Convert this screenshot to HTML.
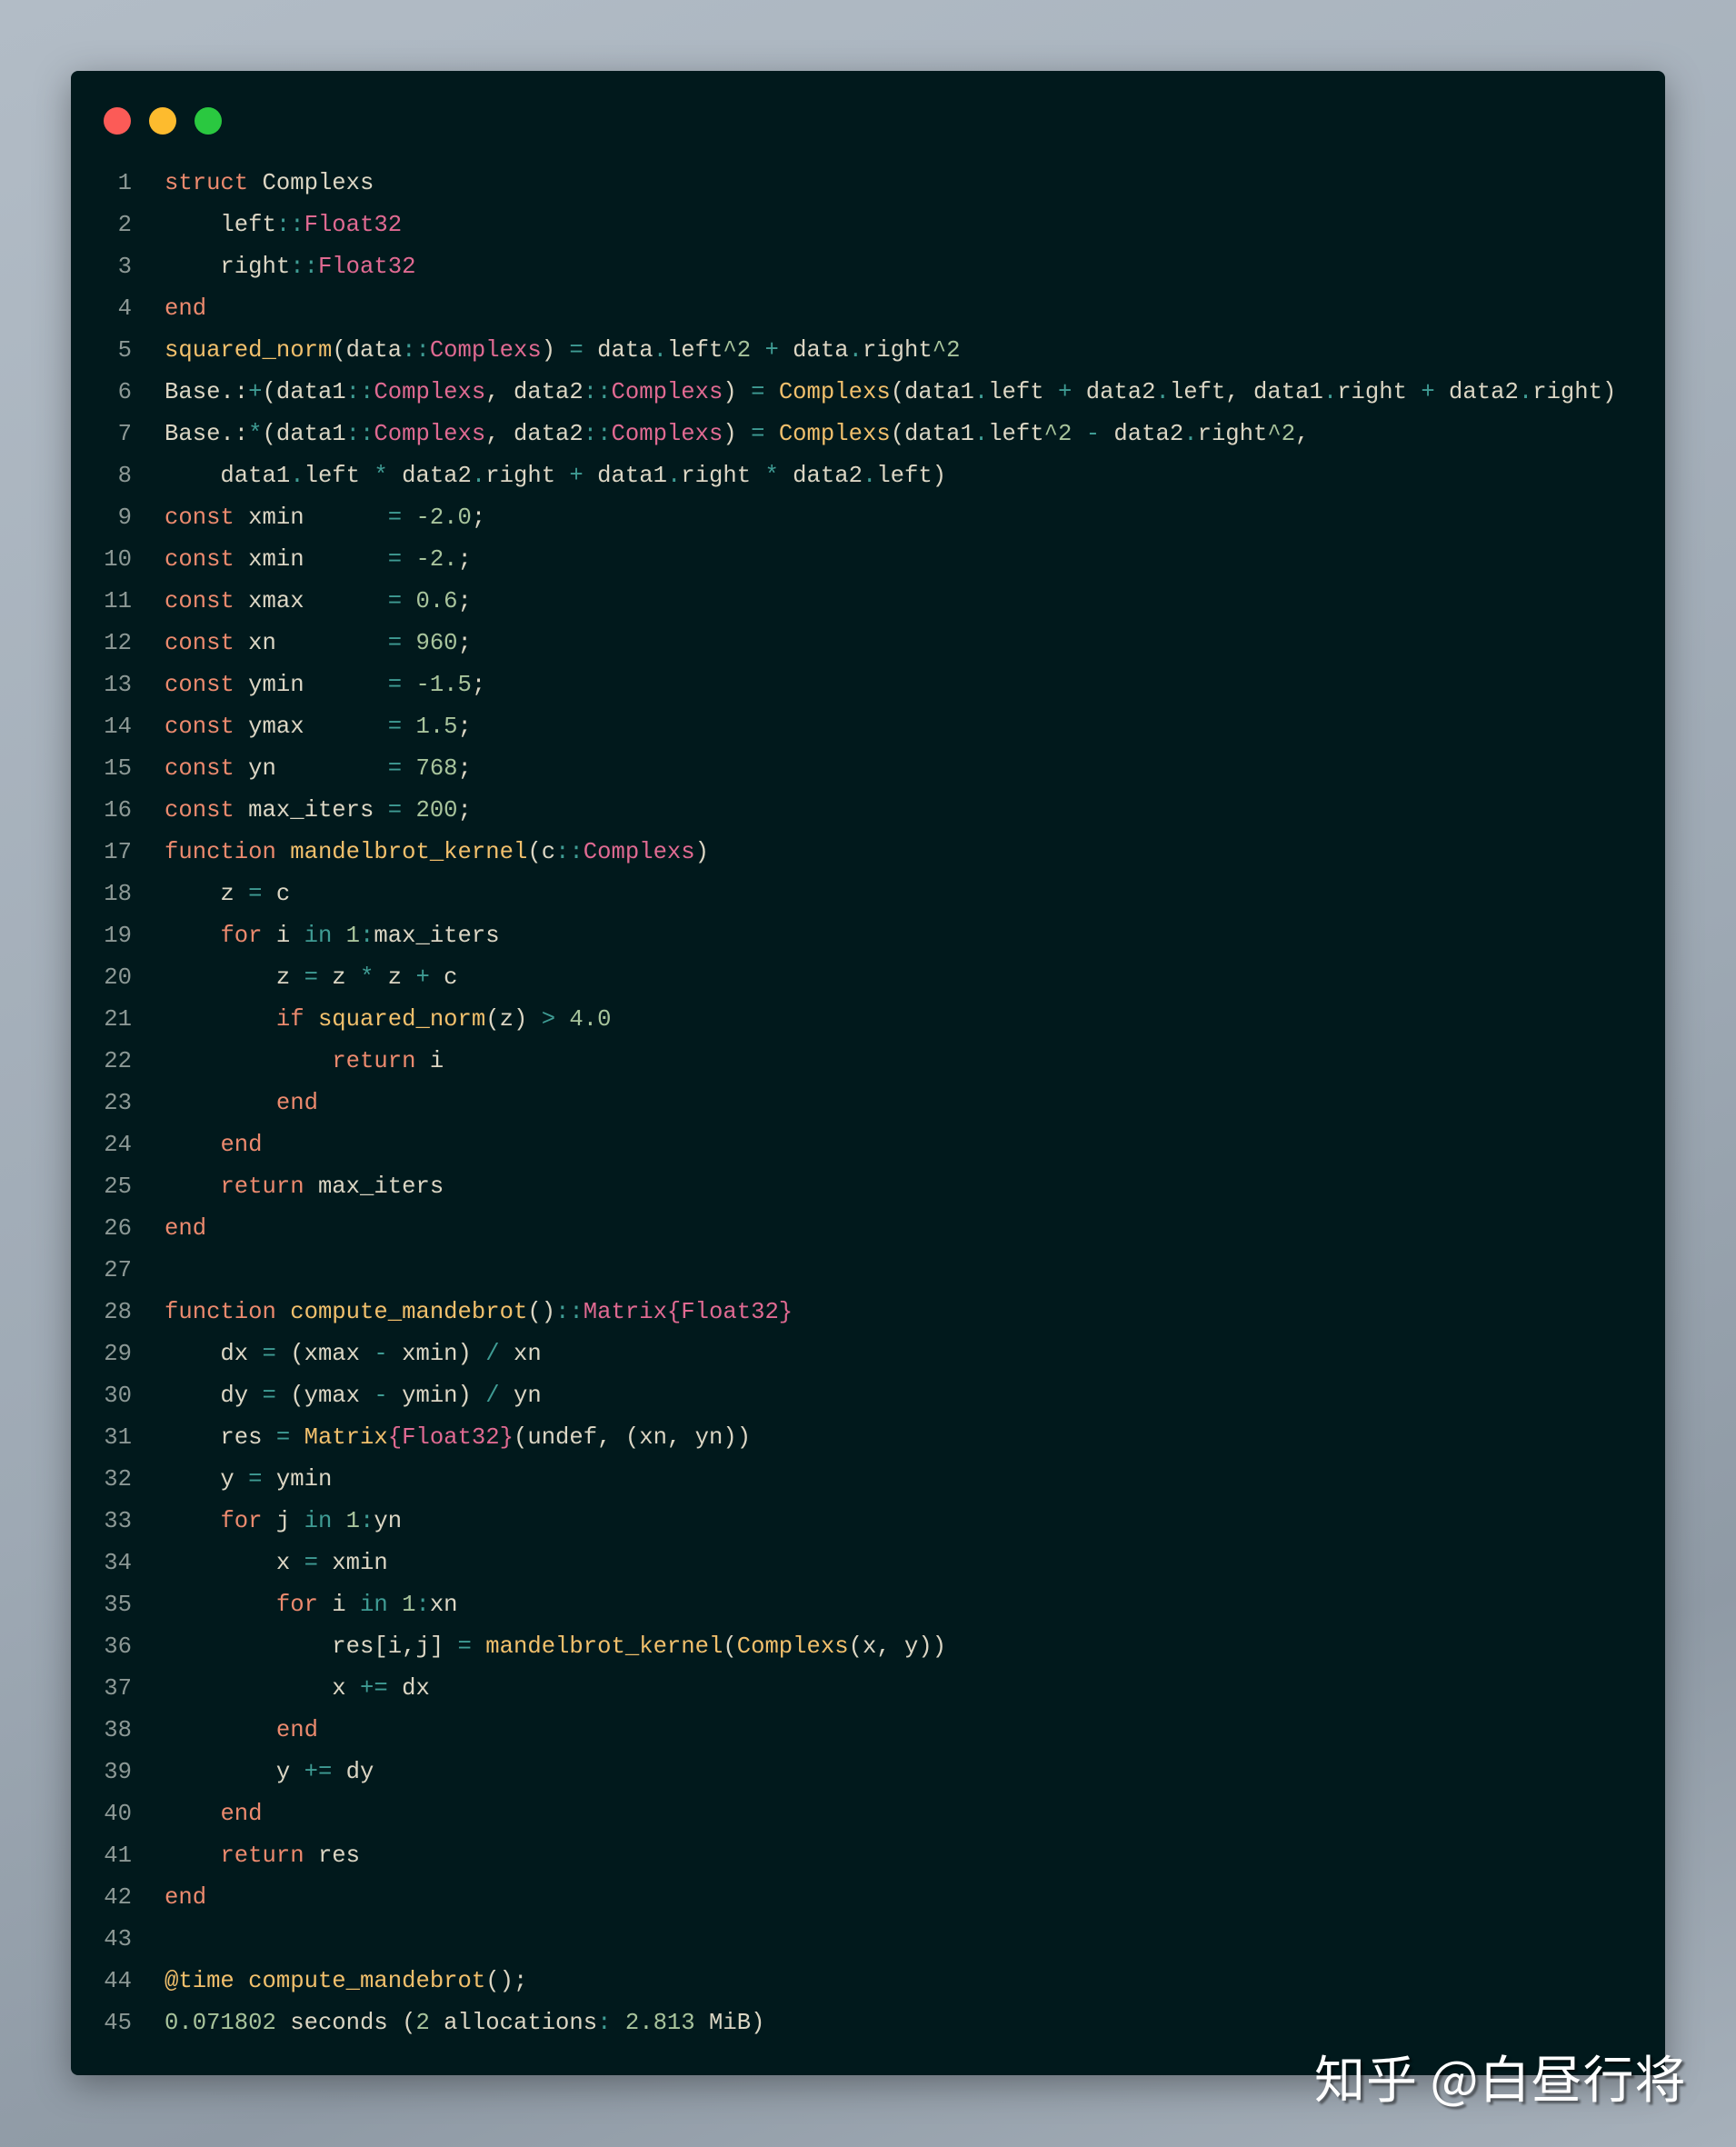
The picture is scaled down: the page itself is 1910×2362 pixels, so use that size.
<!DOCTYPE html>
<html><head><meta charset="utf-8"><style>
*{margin:0;padding:0}
html,body{width:1910px;height:2362px;overflow:hidden}
body{background:linear-gradient(160deg,#b2bcc6 0%,#9ea9b4 55%,#8f9aa5 80%,#a6b0ba 100%);position:relative;font-family:"Liberation Mono",monospace}
.win{position:absolute;left:78px;top:78px;width:1754px;height:2205px;background:#01191c;border-radius:8px;box-shadow:0 10px 40px rgba(0,0,0,.35)}
.dot{position:absolute;top:118px;width:30px;height:30px;border-radius:50%}
pre{position:absolute;left:0;top:179px;font-family:"Liberation Mono",monospace;font-size:25.6px;line-height:46px;color:#dcd6c4}
.ln{display:inline-block;width:145px;text-align:right;color:#8c9895;margin-right:36px}
.k{color:#ec8a6e}.f{color:#f2c06c}.t{color:#e06a92}.o{color:#3f9c94}.n{color:#a8c49c}
.wm{position:absolute;left:1446px;top:2244px;font-family:"Noto Sans CJK SC",sans-serif;font-size:56px;color:#fff;text-shadow:3px 3px 2px rgba(0,0,0,.45);letter-spacing:1px;white-space:nowrap}
</style></head><body>
<div class="win"></div>
<div class="dot" style="left:114px;background:#fc5b57"></div>
<div class="dot" style="left:164px;background:#fdbb2e"></div>
<div class="dot" style="left:214px;background:#2ac840"></div>
<pre><span class="ln">1</span><span class="k">struct</span> Complexs
<span class="ln">2</span>    left<span class="o">::</span><span class="t">Float32</span>
<span class="ln">3</span>    right<span class="o">::</span><span class="t">Float32</span>
<span class="ln">4</span><span class="k">end</span>
<span class="ln">5</span><span class="f">squared_norm</span>(data<span class="o">::</span><span class="t">Complexs</span>) <span class="o">=</span> data<span class="o">.</span>left<span class="n">^2</span> <span class="o">+</span> data<span class="o">.</span>right<span class="n">^2</span>
<span class="ln">6</span>Base.:<span class="o">+</span>(data1<span class="o">::</span><span class="t">Complexs</span>, data2<span class="o">::</span><span class="t">Complexs</span>) <span class="o">=</span> <span class="f">Complexs</span>(data1<span class="o">.</span>left <span class="o">+</span> data2<span class="o">.</span>left, data1<span class="o">.</span>right <span class="o">+</span> data2<span class="o">.</span>right)
<span class="ln">7</span>Base.:<span class="o">*</span>(data1<span class="o">::</span><span class="t">Complexs</span>, data2<span class="o">::</span><span class="t">Complexs</span>) <span class="o">=</span> <span class="f">Complexs</span>(data1<span class="o">.</span>left<span class="n">^2</span> <span class="o">-</span> data2<span class="o">.</span>right<span class="n">^2</span>,
<span class="ln">8</span>    data1<span class="o">.</span>left <span class="o">*</span> data2<span class="o">.</span>right <span class="o">+</span> data1<span class="o">.</span>right <span class="o">*</span> data2<span class="o">.</span>left)
<span class="ln">9</span><span class="k">const</span> xmin      <span class="o">=</span> <span class="n">-2.0</span>;
<span class="ln">10</span><span class="k">const</span> xmin      <span class="o">=</span> <span class="n">-2.</span>;
<span class="ln">11</span><span class="k">const</span> xmax      <span class="o">=</span> <span class="n">0.6</span>;
<span class="ln">12</span><span class="k">const</span> xn        <span class="o">=</span> <span class="n">960</span>;
<span class="ln">13</span><span class="k">const</span> ymin      <span class="o">=</span> <span class="n">-1.5</span>;
<span class="ln">14</span><span class="k">const</span> ymax      <span class="o">=</span> <span class="n">1.5</span>;
<span class="ln">15</span><span class="k">const</span> yn        <span class="o">=</span> <span class="n">768</span>;
<span class="ln">16</span><span class="k">const</span> max_iters <span class="o">=</span> <span class="n">200</span>;
<span class="ln">17</span><span class="k">function</span> <span class="f">mandelbrot_kernel</span>(c<span class="o">::</span><span class="t">Complexs</span>)
<span class="ln">18</span>    z <span class="o">=</span> c
<span class="ln">19</span>    <span class="k">for</span> i <span class="o">in</span> <span class="n">1</span><span class="o">:</span>max_iters
<span class="ln">20</span>        z <span class="o">=</span> z <span class="o">*</span> z <span class="o">+</span> c
<span class="ln">21</span>        <span class="k">if</span> <span class="f">squared_norm</span>(z) <span class="o">&gt;</span> <span class="n">4.0</span>
<span class="ln">22</span>            <span class="k">return</span> i
<span class="ln">23</span>        <span class="k">end</span>
<span class="ln">24</span>    <span class="k">end</span>
<span class="ln">25</span>    <span class="k">return</span> max_iters
<span class="ln">26</span><span class="k">end</span>
<span class="ln">27</span>
<span class="ln">28</span><span class="k">function</span> <span class="f">compute_mandebrot</span>()<span class="o">::</span><span class="t">Matrix{Float32}</span>
<span class="ln">29</span>    dx <span class="o">=</span> (xmax <span class="o">-</span> xmin) <span class="o">/</span> xn
<span class="ln">30</span>    dy <span class="o">=</span> (ymax <span class="o">-</span> ymin) <span class="o">/</span> yn
<span class="ln">31</span>    res <span class="o">=</span> <span class="f">Matrix</span><span class="t">{Float32}</span>(undef, (xn, yn))
<span class="ln">32</span>    y <span class="o">=</span> ymin
<span class="ln">33</span>    <span class="k">for</span> j <span class="o">in</span> <span class="n">1</span><span class="o">:</span>yn
<span class="ln">34</span>        x <span class="o">=</span> xmin
<span class="ln">35</span>        <span class="k">for</span> i <span class="o">in</span> <span class="n">1</span><span class="o">:</span>xn
<span class="ln">36</span>            res[i,j] <span class="o">=</span> <span class="f">mandelbrot_kernel</span>(<span class="f">Complexs</span>(x, y))
<span class="ln">37</span>            x <span class="o">+=</span> dx
<span class="ln">38</span>        <span class="k">end</span>
<span class="ln">39</span>        y <span class="o">+=</span> dy
<span class="ln">40</span>    <span class="k">end</span>
<span class="ln">41</span>    <span class="k">return</span> res
<span class="ln">42</span><span class="k">end</span>
<span class="ln">43</span>
<span class="ln">44</span><span class="f">@time</span> <span class="f">compute_mandebrot</span>();
<span class="ln">45</span><span class="n">0.071802</span> seconds (<span class="n">2</span> allocations<span class="o">:</span> <span class="n">2.813</span> MiB)</pre>
<div class="wm">知乎 @白昼行将</div>
</body></html>
